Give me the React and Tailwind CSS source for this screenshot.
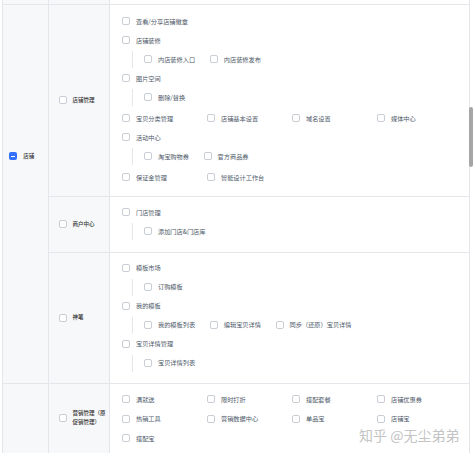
import React from "react";

const Cb = () => (
  <span className="block w-[8px] h-[8px] border border-[#c9cdd4] rounded-[2px] bg-white shrink-0" />
);

const Item = ({ t }) => (
  <div className="flex items-center gap-[5.7px] whitespace-nowrap">
    <Cb />
    <span>{t}</span>
  </div>
);

const Line = ({ t, h = "h-[19px]" }) => (
  <div className={`${h} flex items-center`}>
    <Item t={t} />
  </div>
);

const Sub = ({ items }) => (
  <div className="h-[19px] flex items-stretch pl-[9.4px] py-[1px]">
    <div className="border-l border-[#e5e6eb] pl-[11.6px] flex items-center gap-[15px]">
      {items.map((t) => (
        <Item key={t} t={t} />
      ))}
    </div>
  </div>
);

const GridRow = ({ items, cls = "h-[19px] mt-[2px]" }) => (
  <div className={`${cls} grid grid-cols-[85px_85px_85px_85px] items-center`}>
    {items.map((t) => (
      <Item key={t} t={t} />
    ))}
  </div>
);

const Label = ({ children }) => (
  <div className="flex items-center gap-[5.5px] pl-[10px] text-[5.5px] leading-[9px] text-[#333] font-medium">
    <Cb />
    <span className="w-[35px]">{children}</span>
  </div>
);

export default function App() {
  const c2 = "bg-[#f7f8fa] border-r border-b border-[#e5e6eb] flex items-center";
  const c3 = "border-b border-[#e5e6eb] pl-[12.3px] text-[6.2px] text-[#4e5969]";
  return (
    <div className="relative w-[474px] h-[455px] overflow-hidden bg-white font-['Noto_Sans_CJK_SC',sans-serif]">
      <div className="ml-[2px] w-[468px] h-[453px] border-l border-r border-[#e5e6eb] grid grid-cols-[46px_61px_1fr] grid-rows-[auto_auto_auto_auto_1fr]">
        {/* top spacer row */}
        <div className="h-[5px] bg-[#f7f8fa] border-r border-b border-[#e5e6eb]" />
        <div className="h-[5px] bg-[#f7f8fa] border-r border-b border-[#e5e6eb]" />
        <div className="h-[5px] border-b border-[#e5e6eb]" />

        {/* 店铺 column */}
        <div className="row-span-3 bg-[#f7f8fa] border-r border-b border-[#e5e6eb] pt-[146px] pl-[6.3px]">
          <div className="h-[10px] flex items-center gap-[6px] text-[5.5px] text-[#333] font-medium">
            <span className="w-[8px] h-[8px] rounded-[2px] bg-[#3370ff] flex items-center justify-center shrink-0">
              <span className="block w-[4px] h-[1px] bg-white" />
            </span>
            <span>店铺</span>
          </div>
        </div>

        {/* row 1 */}
        <div className={c2}>
          <Label>店铺管理</Label>
        </div>
        <div className={`${c3} pt-[7px] pb-[8.5px]`}>
          <Line t="查看/分享店铺徽章" />
          <Line t="店铺装修" />
          <Sub items={["内店装修入口", "内店装修发布"]} />
          <Line t="图片空间" />
          <Sub items={["删除/替换"]} />
          <GridRow items={["宝贝分类管理", "店铺基本设置", "域名设置", "媒体中心"]} />
          <Line t="活动中心" />
          <Sub items={["淘宝购物券", "官方商品券"]} />
          <GridRow items={["保证金管理", "智能设计工作台"]} />
        </div>

        {/* row 2 */}
        <div className={c2}>
          <Label>商户中心</Label>
        </div>
        <div className={`${c3} pt-[6.5px] pb-[10.5px]`}>
          <Line t="门店管理" />
          <Sub items={["添加门店&门店库"]} />
        </div>

        {/* row 3 */}
        <div className={c2}>
          <Label>神笔</Label>
        </div>
        <div className={`${c3} pt-[6px] pb-[10px]`}>
          <Line t="模板市场" />
          <Sub items={["订购模板"]} />
          <Line t="我的模板" />
          <Sub items={["我的模板列表", "编辑宝贝详情", "同步（还原）宝贝详情"]} />
          <Line t="宝贝详情管理" />
          <Sub items={["宝贝详情列表"]} />
        </div>

        {/* row 4 */}
        <div className="bg-[#f7f8fa] border-r border-[#e5e6eb]" />
        <div className="bg-[#f7f8fa] border-r border-[#e5e6eb] flex items-center">
          <Label>营销管理（原促销管理）</Label>
        </div>
        <div className="pl-[12.3px] pt-[6px] text-[6.2px] text-[#4e5969]">
          <GridRow cls="h-[19.5px]" items={["满就送", "限时打折", "搭配套餐", "店铺优惠券"]} />
          <GridRow cls="h-[19.5px]" items={["热销工具", "营销数据中心", "单品宝", "店铺宝"]} />
          <GridRow cls="h-[19.5px]" items={["搭配宝"]} />
        </div>
      </div>

      {/* scrollbar thumb */}
      <div className="absolute left-[469px] top-[107px] w-[4px] h-[60px] rounded-[2px] bg-[#a6a6a6]" />

      {/* watermark */}
      <div className="absolute left-[359px] top-[427px] text-[14px] leading-[16px] text-[#c4c4c4] whitespace-nowrap [text-shadow:0_0_1px_#ffffff]">
        知乎 @无尘弟弟
      </div>
    </div>
  );
}
